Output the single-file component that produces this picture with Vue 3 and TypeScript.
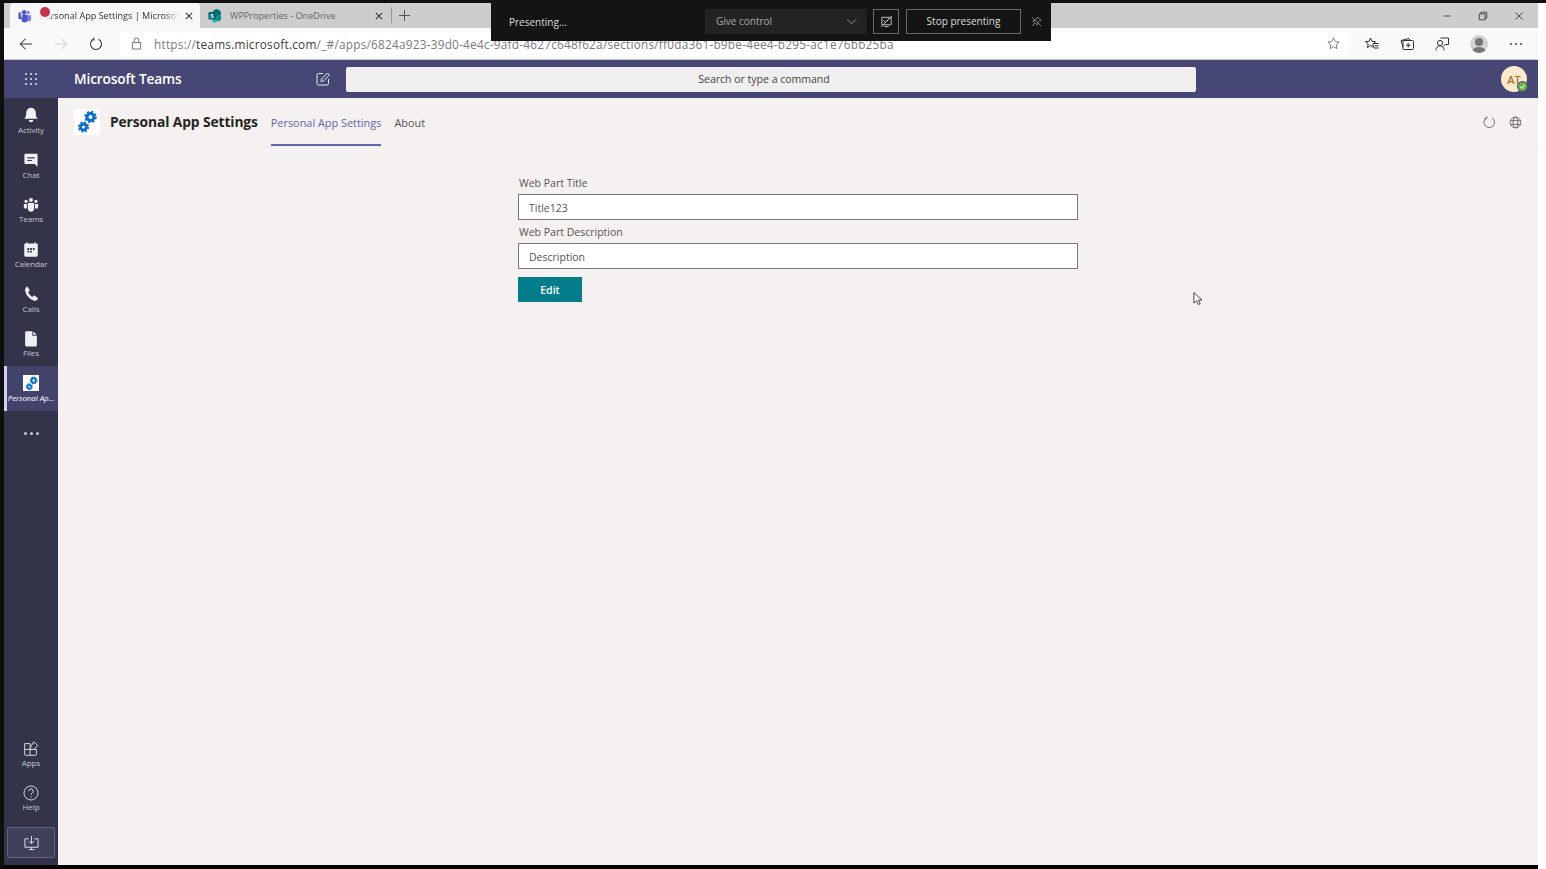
<script setup lang="ts">
interface RailItem { label: string; icon: string }
const topItems: RailItem[] = [
  { label: 'Activity', icon: 'bell' },
  { label: 'Chat', icon: 'chat' },
  { label: 'Teams', icon: 'teams' },
  { label: 'Calendar', icon: 'calendar' },
  { label: 'Calls', icon: 'calls' },
  { label: 'Files', icon: 'files' },
]
const urlHost = 'teams.microsoft.com'
const urlPath = '/_#/apps/6824a923-39d0-4e4c-9afd-4627c648f62a/sections/ff0da361-b9be-4ee4-b295-ac1e76bb25ba'
</script>

<template>
  <div class="screen">
    <div class="frame">
      <div class="window">
        <div class="tabstrip">
          <div class="tab active">
            <svg class="favicon" viewBox="0 0 16 16">
              <circle cx="11.5" cy="4" r="2" fill="#7b83eb" />
              <path d="M9 7h6v4a3 3 0 0 1-6 0z" fill="#7b83eb" />
              <circle cx="7" cy="3.5" r="2.5" fill="#5059c9" />
              <path d="M4 6.5h7v5.500a3.500 3.500 0 0 1-7 0z" fill="#5059c9" />
              <rect x="0.500" y="4" width="7.500" height="7.500" rx="1" fill="#4b53bc" />
              <path d="M2.500 5.800h3.500M4.250 5.800v4" stroke="#fff" stroke-width="1.100" />
            </svg>
            <span class="tab-title">Personal App Settings | Microsof</span>
            <span class="rec-dot"></span>
            <svg class="tab-x" viewBox="0 0 10 10"><path d="M1 1l8 8M9 1l-8 8" /></svg>
          </div>
          <div class="tab">
            <svg class="favicon" viewBox="0 0 16 16">
              <circle cx="10" cy="5" r="4.800" fill="#036c70" />
              <circle cx="11" cy="10" r="4" fill="#14868c" />
              <circle cx="7.500" cy="13" r="2.800" fill="#2ab0b8" />
              <rect x="0.500" y="3.500" width="8.500" height="8.500" rx="1" fill="#03686c" />
              <text x="4.700" y="10.500" class="sp-letter">S</text>
            </svg>
            <span class="tab-title muted">WPProperties - OneDrive</span>
            <svg class="tab-x" viewBox="0 0 10 10"><path d="M1 1l8 8M9 1l-8 8" /></svg>
          </div>
          <span class="tab-sep"></span>
          <svg class="new-tab" viewBox="0 0 12 12"><path d="M6 0v12M0 6h12" /></svg>
          <div class="spacer"></div>
          <div class="win-controls">
            <svg viewBox="0 0 12 12"><path d="M2 6h8" /></svg>
            <svg viewBox="0 0 12 12"><path d="M1.500 3.500h7v7h-7zM3.500 3.500v-2h7v7h-2" /></svg>
            <svg viewBox="0 0 12 12"><path d="M1.500 1.500l9 9M10.500 1.500l-9 9" /></svg>
          </div>
        </div>

        <div class="toolbar">
          <svg class="nav-icon" viewBox="0 0 16 16"><path d="M15 8H1.500M7.500 2l-6 6 6 6" /></svg>
          <svg class="nav-icon faint" viewBox="0 0 16 16"><path d="M1 8h13.500M8.500 2l6 6-6 6" /></svg>
          <svg class="nav-icon" viewBox="0 0 16 16"><path d="M5.500 2.300A6.300 6.300 0 1 0 11 2.500M5.500 0.500v3h-3" /></svg>
          <div class="address">
            <svg class="lock" viewBox="0 0 12 14"><path d="M1.500 6h9v7h-9zM3.500 6V3.500a2.500 2.500 0 0 1 5 0V6" /></svg>
            <span class="url">https://<b>{{ urlHost }}</b>{{ urlPath }}</span>
            <svg class="star" viewBox="0 0 14 14"><path d="M7 1l1.800 3.900 4.200.5-3.100 2.900.8 4.200L7 10.400l-3.700 2.100.8-4.200L1 5.400l4.200-.5z" /></svg>
          </div>
          <div class="tool-icons">
            <svg viewBox="0 0 14 14"><path d="M5.500 1l1.400 3.300 3.600.3-2.700 2.400.8 3.500-3.100-1.900L2.400 10.500l.8-3.500L.5 4.600l3.600-.3zM9 6.500h4.500M9.500 8.800h4M9 11h4.500" /></svg>
            <svg viewBox="0 0 14 14"><path d="M3 3.500h9.500a1 1 0 0 1 1 1v7a1 1 0 0 1-1 1H4a1 1 0 0 1-1-1zM3 10L1 3.500 9 1.500l1 2M8.200 6v4.500M6 8.200h4.500" /></svg>
            <svg viewBox="0 0 14 14"><circle cx="5" cy="6" r="2.600" /><path d="M.8 13.300c.3-2.700 2-4.400 4.200-4.400s3.900 1.700 4.200 4.400M5.500 1h8v6.500h-3l-2 1.800" /></svg>
          </div>
          <div class="profile"><span class="p-head"></span><span class="p-body"></span></div>
          <div class="more"><i></i><i></i><i></i></div>
        </div>

        <header class="teams-bar">
          <div class="waffle"><i v-for="n in 9" :key="n"></i></div>
          <span class="brand">Microsoft Teams</span>
          <svg class="compose" viewBox="0 0 14 14"><path d="M7 1.500H2.500a1.500 1.500 0 0 0-1.500 1.500v8.500A1.500 1.500 0 0 0 2.500 13H11a1.500 1.500 0 0 0 1.500-1.500V7M5 9.500l.5-2.500L11.500 1 13.500 3l-6 6z" /></svg>
          <div class="search">Search or type a command</div>
          <div class="avatar">AT<span class="presence"><svg viewBox="0 0 8 8"><path d="M2 4.200l1.500 1.400L6 2.800" /></svg></span></div>
        </header>

        <div class="body">
          <nav class="rail">
            <div class="rail-group">
              <div v-for="item in topItems" :key="item.label" class="rail-item">
                <svg class="rail-icon" viewBox="0 0 20 20">
                  <g v-if="item.icon === 'bell'"><path d="M10 2a5.300 5.300 0 0 0-5.300 5.300c0 3.600-.6 5.400-2.200 7h15c-1.600-1.600-2.200-3.400-2.200-7A5.300 5.300 0 0 0 10 2z" /><path d="M7.500 15.500h5a2.500 2.500 0 0 1-5 0z" /></g>
                  <path v-else-if="item.icon === 'chat'" fill-rule="evenodd" d="M3.500 3h13a.8.8 0 0 1 .8.8v13.700l-3.300-3H3.500a.8.8 0 0 1-.8-.8V3.800a.8.8 0 0 1 .8-.8zM6 7v1.200h8V7zm0 3v1.200h5V10z" />
                  <g v-else-if="item.icon === 'teams'" transform="translate(0 1)"><circle cx="10" cy="4.500" r="2.200" /><circle cx="4.500" cy="6" r="1.800" /><circle cx="15.500" cy="6" r="1.800" /><path d="M6.500 8h7v6a3.500 3.500 0 0 1-7 0z" /><path d="M2 9h3.500v4.500A2 2 0 0 1 2 12zM14.500 9H18v3a2 2 0 0 1-3.500 1.500z" /></g>
                  <path v-else-if="item.icon === 'calendar'" transform="translate(0 1)" fill-rule="evenodd" d="M5 1.500h1.200v1.500h7.600V1.500H15V3h1.500a1 1 0 0 1 1 1v12a1.500 1.500 0 0 1-1.500 1.500H4A1.500 1.500 0 0 1 2.500 16V4a1 1 0 0 1 1-1H5zM6 8v2h2V8zm3 0v2h2V8zm3 0v2h2V8zm-6 3v2h2v-2zm3 0v2h2v-2z" />
                  <path v-else-if="item.icon === 'calls'" d="M6 2l2.300 3.300c.3.500.2 1.100-.2 1.500L6.800 8c.8 2 2.600 4 4.700 5.200l1.300-1.200c.4-.4 1-.4 1.500-.1l3 2.300c.4.300.5.900.2 1.300-.9 1.500-2.300 2.500-3.800 2-5.500-1.600-9.200-6-10.200-11-.3-1.500.5-3.300 1.500-4.400.3-.4.800-.4.900-.1z" />
                  <path v-else transform="translate(0 1)" d="M5 1.500h6.500v5h5V17a1.500 1.500 0 0 1-1.500 1.500H5A1.500 1.500 0 0 1 3.500 17V3A1.500 1.500 0 0 1 5 1.500zM12.500 1.700l3.800 3.800h-3.800z" />
                </svg>
                <span class="rail-label">{{ item.label }}</span>
              </div>
              <div class="rail-item selected">
                <div class="app-tile small">
                  <svg viewBox="0 0 24 24"><use href="#gears" /></svg>
                </div>
                <span class="rail-label italic">Personal Ap...</span>
              </div>
              <div class="rail-dots"><i></i><i></i><i></i></div>
            </div>
            <div class="rail-group bottom">
              <div class="rail-item">
                <svg class="rail-icon line" viewBox="0 0 20 20"><path d="M3 4h6v13H4a1 1 0 0 1-1-1zM3 10.500h13V16a1 1 0 0 1-1 1H9M9.500 10.500V8l3.500-6 4.500 4-4 4.500" /></svg>
                <span class="rail-label">Apps</span>
              </div>
              <div class="rail-item">
                <svg class="rail-icon line" viewBox="0 0 20 20"><circle cx="10" cy="10" r="7.800" /><path d="M7.500 8a2.500 2.500 0 1 1 3.800 2.100c-.9.600-1.300 1-1.300 2.100M10 14v1.200" /></svg>
                <span class="rail-label">Help</span>
              </div>
              <div class="download">
                <svg viewBox="0 0 18 16"><path d="M6 3H2v9h14V3h-4M9 0v7.500M6.500 5.500L9 8l2.500-2.500M6 14.500h6M9 12v2.500" /></svg>
              </div>
            </div>
          </nav>

          <main class="main">
            <div class="app-head">
              <div class="app-tile">
                <svg viewBox="0 0 24 24">
                  <defs>
                    <g id="gears" fill="none" stroke="#0a6ccf">
                      <circle cx="15.500" cy="7" r="3.500" stroke-width="3" />
                      <circle cx="15.500" cy="7" r="5.300" stroke-width="1.900" stroke-dasharray="2.200 1.960" />
                      <circle cx="8.500" cy="17" r="3" stroke-width="2.800" />
                      <circle cx="8.500" cy="17" r="4.700" stroke-width="1.800" stroke-dasharray="1.950 1.740" />
                    </g>
                  </defs>
                  <use href="#gears" />
                </svg>
              </div>
              <h1 class="app-title">Personal App Settings</h1>
              <div class="tabs">
                <span class="app-tab current">Personal App Settings</span>
                <span class="app-tab">About</span>
              </div>
              <div class="spacer"></div>
              <div class="head-actions">
                <svg viewBox="0 0 14 14"><path d="M4 1.800A5.700 5.700 0 1 0 9.500 1.800M4 .3v2.500H1.500" /></svg>
                <svg viewBox="0 0 14 14"><circle cx="7" cy="7" r="5.800" /><ellipse cx="7" cy="7" rx="2.600" ry="5.800" /><path d="M1.200 5h11.600M1.200 9h11.600" /></svg>
              </div>
            </div>
            <div class="content">
              <form class="form">
                <label class="field-label">Web Part Title</label>
                <div class="input">Title123</div>
                <label class="field-label second">Web Part Description</label>
                <div class="input">Description</div>
                <button type="button" class="edit">Edit</button>
              </form>
              <svg class="cursor" viewBox="0 0 12 16"><path d="M1 1v11.500l3-2.500 1.800 4 2-1-1.800-3.800h3.800z" /></svg>
            </div>
          </main>
        </div>
      </div>
    </div>

    <div class="share-bar">
      <span class="presenting">Presenting...</span>
      <div class="give-control">
        <span>Give control</span>
        <svg viewBox="0 0 12 8"><path d="M1 1.500L6 6.500l5-5" /></svg>
      </div>
      <div class="screen-btn">
        <svg viewBox="0 0 14 14"><path d="M2 2.500h10v8H2zM4.500 12.500h5M3.500 5.500l2.500 2.500 4-4.500M1 13L13 1" /></svg>
      </div>
      <div class="stop">Stop presenting</div>
      <svg class="pin" viewBox="0 0 12 12"><path d="M7 1l4 4-2 .8-2 2-.3 2.200L2 5.300l2.200-.3 2-2zM4 8l-3 3M1 1l10 10" /></svg>
    </div>
  </div>
</template>

<style>
html, body { margin: 0; background: #000; overflow: hidden; }
</style>

<style scoped>
.screen {
  position: relative;
  width: 1546px;
  height: 869px;
  background: #000;
  font-family: "Open Sans", "Noto Sans", sans-serif;
  overflow: hidden;
}
.frame {
  height: 869px;
  box-sizing: border-box;
  padding: 3px 0 0 4px;
  background: #0f0f0f;
}
.window {
  height: 100%;
  box-sizing: border-box;
  padding-bottom: 4px;
  background: #000;
  display: flex;
  flex-direction: column;
  border-right: 8px solid #fdfdfd;
}
.spacer { flex: 1; }

.tabstrip {
  height: 25px;
  flex: none;
  background: #cdcdcd;
  display: flex;
  align-items: flex-end;
  padding-left: 6px;
  position: relative;
}
.tab {
  width: 190px;
  height: 25px;
  box-sizing: border-box;
  display: flex;
  align-items: center;
  padding: 0 8px 0 8px;
  position: relative;
  color: #5f5f5f;
}
.tab.active {
  background: #f7f7f7;
  border-radius: 3px 3px 0 0;
  color: #333;
}
.favicon { width: 14px; height: 14px; flex: none; }
.sp-letter { font: 700 6px "Liberation Sans", sans-serif; fill: #fff; text-anchor: middle; }
.tab-title {
  flex: none;
  margin-left: 8px;
  font-size: 9.100px;
  white-space: nowrap;
}
.tab.active .tab-title {
  -webkit-mask-image: linear-gradient(to right, #000 90%, transparent);
  mask-image: linear-gradient(to right, #000 90%, transparent);
}
.muted { color: #666; }
.rec-dot {
  position: absolute;
  left: 30px;
  top: 4px;
  width: 10px;
  height: 10px;
  border-radius: 50%;
  background: #c4314b;
  box-shadow: 0 0 0 3px rgba(247, 247, 247, 0.85);
}
.tab-x { position: absolute; right: 7px; top: 9px; width: 8px; height: 8px; fill: none; stroke: #333; stroke-width: 1.300; }
.tab-sep { width: 1px; height: 16px; background: #9a9a9a; margin: 0 0 5px 1px; }
.new-tab { width: 11px; height: 11px; margin: 0 0 7px 7px; fill: none; stroke: #555; stroke-width: 1.100; }
.win-controls { display: flex; align-self: center; gap: 26px; margin-right: 14px; }
.win-controls svg { width: 10px; height: 10px; fill: none; stroke: #333; stroke-width: 1; }

.toolbar {
  height: 31px;
  flex: none;
  background: #f9f9f9;
  display: flex;
  align-items: center;
  padding-left: 15px;
  box-sizing: border-box;
}
.nav-icon { width: 14px; height: 14px; margin-right: 21px; fill: none; stroke: #3a3a3a; stroke-width: 1.200; flex: none; }
.nav-icon.faint { stroke: #cfcfcf; }
.address {
  width: 1229px;
  height: 24px;
  margin-left: -4px;
  background: #fff;
  border-radius: 3px;
  display: flex;
  align-items: center;
  padding-left: 11px;
  box-sizing: border-box;
  flex: none;
}
.lock { width: 11px; height: 13px; fill: none; stroke: #6a6a6a; stroke-width: 1; flex: none; }
.url {
  margin-left: 12px;
  font-size: 11.800px;
  color: #7a7a7a;
  white-space: nowrap;
  letter-spacing: 0.230px;
  flex: 1;
}
.url b { font-weight: 400; color: #3c3c3c; }
.star { width: 13px; height: 13px; fill: none; stroke: #777; stroke-width: 1; margin-right: 9px; flex: none; }
.tool-icons { display: flex; gap: 21px; margin-left: 16px; }
.tool-icons svg { width: 14px; height: 14px; fill: none; stroke: #333; stroke-width: 1; }
.profile {
  width: 18px;
  height: 18px;
  border-radius: 50%;
  background: #d2d2d2;
  margin-left: 21px;
  position: relative;
  overflow: hidden;
  flex: none;
}
.p-head { position: absolute; left: 5px; top: 3px; width: 8px; height: 8px; border-radius: 50%; background: #757575; }
.p-body { position: absolute; left: 2px; top: 12px; width: 14px; height: 10px; border-radius: 50%; background: #757575; }
.more { display: flex; gap: 3px; margin-left: 22px; }
.more i { width: 2px; height: 2px; border-radius: 50%; background: #444; }

.teams-bar {
  height: 39px;
  flex: none;
  background: #464775;
  border-top: 1px solid #c9c9d6;
  box-sizing: border-box;
  display: flex;
  align-items: center;
  padding-left: 21px;
  position: relative;
}
.waffle { display: grid; grid-template-columns: repeat(3, 2px); gap: 3px; width: 12px; flex: none; margin-bottom: 1px; }
.waffle i { width: 2px; height: 2px; background: #e4e4ee; border-radius: 50%; }
.brand { margin-left: 37px; color: #fff; font-size: 13.700px; font-weight: 600; width: 242px; flex: none; letter-spacing: -0.150px; white-space: nowrap; padding-bottom: 1px; }
.compose { width: 14px; height: 14px; fill: none; stroke: #e8e8f0; stroke-width: 1; flex: none; }
.search {
  width: 850px;
  height: 25px;
  margin-left: 16px;
  padding-right: 14px;
  box-sizing: border-box;
  background: #f0eeee;
  border-radius: 2px;
  font-size: 10.500px;
  color: #444;
  display: flex;
  align-items: center;
  justify-content: center;
  flex: none;
}
.avatar {
  width: 26px;
  height: 26px;
  border-radius: 50%;
  background: #fbe9cb;
  margin-left: 305px;
  color: #a8742a;
  font-size: 11px;
  font-weight: 600;
  display: flex;
  align-items: center;
  justify-content: center;
  position: relative;
  flex: none;
}
.presence {
  position: absolute;
  right: -1px;
  bottom: 0;
  width: 9px;
  height: 9px;
  border-radius: 50%;
  background: #6bb047;
  border: 1px solid #464775;
  box-sizing: content-box;
  display: flex;
}
.presence svg { width: 9px; height: 9px; fill: none; stroke: #e6f3de; stroke-width: 1; }

.body { flex: 1; display: flex; min-height: 0; }
.rail {
  width: 54px;
  flex: none;
  background: #33344a;
  display: flex;
  flex-direction: column;
  justify-content: space-between;
}
.rail-group { display: flex; flex-direction: column; }
.rail-item {
  height: 44.700px;
  display: flex;
  flex-direction: column;
  align-items: center;
  padding-top: 8px;
  box-sizing: border-box;
  color: #c4c4d0;
}
.rail-icon { width: 18px; height: 18px; fill: #f0f0f4; flex: none; overflow: visible; }
.rail-icon.line { fill: none; stroke: #d8d8e0; stroke-width: 1.100; }
.rail-label { font-size: 8px; line-height: 10px; margin-top: 1px; white-space: nowrap; letter-spacing: -0.100px; }
.bottom .rail-label { margin-top: 0; }
.rail-label.italic { font-style: italic; color: #fff; margin-top: 2px; }
.rail-item.selected {
  height: 45px;
  background: #42436a;
  border-left: 3px solid #cfd0ee;
  padding: 9px 3px 0 0;
}
.app-tile {
  width: 26px;
  height: 26px;
  background: #fff;
  border-radius: 2px;
  display: flex;
  align-items: center;
  justify-content: center;
  flex: none;
}
.app-tile svg { width: 24px; height: 24px; }
.app-tile.small { width: 16px; height: 16px; border-radius: 0; }
.app-tile.small svg { width: 15px; height: 15px; }
.rail-dots { display: flex; justify-content: center; gap: 3px; padding-top: 21px; }
.rail-dots i { width: 3px; height: 3px; border-radius: 50%; background: #c8c8d4; }
.rail-group.bottom { padding-bottom: 7px; }
.download {
  width: 48px;
  height: 31px;
  margin: 6px auto 0;
  padding-top: 2px;
  box-sizing: border-box;
  border: 1px solid #62637c;
  border-radius: 2px;
  background: #3f405a;
  display: flex;
  align-items: center;
  justify-content: center;
}
.download svg { width: 17px; height: 15px; fill: none; stroke: #e4e4ea; stroke-width: 1; }

.main { flex: 1; background: #f4f1f0; display: flex; flex-direction: column; min-width: 0; }
.app-head {
  height: 49px;
  box-sizing: border-box;
  border-bottom: 1px solid #ecebea;
  display: flex;
  align-items: center;
  padding-left: 16px;
  padding-bottom: 1px;
}
.app-title { margin: 0 0 0 10px; font-size: 13.800px; font-weight: 700; color: #252423; white-space: nowrap; letter-spacing: -0.100px; }
.tabs { display: flex; align-self: stretch; margin-left: 13px; gap: 13px; }
.app-tab {
  font-size: 10.900px;
  color: #555;
  display: flex;
  align-items: center;
  padding-top: 3px;
  box-sizing: border-box;
  border-bottom: 2px solid transparent;
  margin-bottom: -1px;
}
.app-tab.current { color: #6264a7; border-bottom-color: #6264a7; }
.head-actions { display: flex; gap: 13px; margin: 1px 16px 0 0; }
.head-actions svg { width: 13px; height: 13px; fill: none; stroke: #5c5c5c; stroke-width: 0.900; }

.content { flex: 1; position: relative; }
.form { width: 560px; margin-left: 460px; padding-top: 29px; display: flex; flex-direction: column; align-items: flex-start; }
.field-label { font-size: 10.500px; line-height: 15px; color: #555; margin-left: 1px; }
.field-label.second { margin-top: 5px; }
.input {
  width: 100%;
  height: 26px;
  margin-top: 3px;
  box-sizing: border-box;
  border: 1px solid #7a7876;
  background: #fff;
  font-size: 10.500px;
  color: #555;
  padding: 1px 0 0 10px;
  display: flex;
  align-items: center;
  white-space: nowrap;
}
.edit {
  width: 64px;
  height: 25px;
  margin-top: 8px;
  border: 0;
  background: #047c8c;
  color: #fff;
  font: 600 10.500px "Open Sans", "Noto Sans", sans-serif;
  padding: 0;
}
.cursor {
  position: absolute;
  left: 1135px;
  top: 144px;
  width: 11px;
  height: 16px;
  fill: #fff;
  stroke: #333;
  stroke-width: 1;
}

.share-bar {
  position: absolute;
  left: 491px;
  top: 0;
  width: 560px;
  height: 41px;
  background: #141414;
  display: flex;
  align-items: center;
  box-sizing: border-box;
  padding: 2px 0 0 18px;
  color: #dcdcdc;
  font-size: 10px;
}
.presenting { width: 196px; flex: none; white-space: nowrap; }
.give-control {
  width: 162px;
  height: 25px;
  flex: none;
  background: #232323;
  color: #a8a8a8;
  display: flex;
  align-items: center;
  justify-content: space-between;
  padding: 0 10px 1px 11px;
  box-sizing: border-box;
}
.give-control svg { width: 11px; height: 7px; fill: none; stroke: #9a9a9a; stroke-width: 1; }
.screen-btn {
  width: 26px;
  height: 25px;
  margin-left: 6px;
  border: 1px solid #6a6a6a;
  box-sizing: border-box;
  display: flex;
  align-items: center;
  justify-content: center;
  flex: none;
}
.screen-btn svg { width: 13px; height: 13px; fill: none; stroke: #c8c8c8; stroke-width: 1; }
.stop {
  width: 115px;
  height: 25px;
  margin-left: 7px;
  padding-bottom: 1px;
  border: 1px solid #6a6a6a;
  box-sizing: border-box;
  display: flex;
  align-items: center;
  justify-content: center;
  flex: none;
  white-space: nowrap;
}
.pin { width: 11px; height: 11px; margin-left: 10px; fill: none; stroke: #8a8a8a; stroke-width: 1; flex: none; }
</style>
